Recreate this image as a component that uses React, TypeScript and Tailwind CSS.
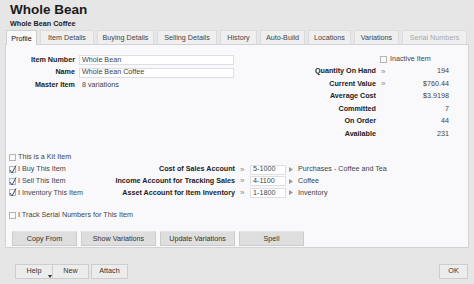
import React from "react";

const Check = ({ checked = false }: { checked?: boolean }) => (
  <span className="relative inline-block w-[7px] h-[7px] border border-[#b4b4b4] bg-[#fafafa] shrink-0">
    {checked && (
      <svg className="absolute left-[-1px] top-[-2px]" width="8" height="9" viewBox="0 0 8 9">
        <path d="M1 5 L3 8 L7 0.5" fill="none" stroke="#3b4a7a" strokeWidth="1" />
      </svg>
    )}
  </span>
);

const tabs: [string, number, boolean?][] = [
  ["Profile", 31],
  ["Item Details", 54],
  ["Buying Details", 57],
  ["Selling Details", 60],
  ["History", 37],
  ["Auto-Build", 45],
  ["Locations", 43],
  ["Variations", 45],
  ["Serial Numbers", 65, true],
];

const stats: [string, boolean, string][] = [
  ["Quantity On Hand", true, "194"],
  ["Current Value", true, "$760.44"],
  ["Average Cost", false, "$3.9198"],
  ["Committed", false, "7"],
  ["On Order", false, "44"],
  ["Available", false, "231"],
];

const accounts: [string, boolean, string, string, string][] = [
  ["This is a Kit Item", false, "", "", ""],
  ["I Buy This Item", true, "Cost of Sales Account", "5-1000", "Purchases - Coffee and Tea"],
  ["I Sell This Item", true, "Income Account for Tracking Sales", "4-1100", "Coffee"],
  ["I Inventory This Item", true, "Asset Account for Item Inventory", "1-1800", "Inventory"],
];

export default function App() {
  return (
    <div className="w-[474px] h-[284px] bg-[#e6e6e6] font-['Liberation_Sans','Arial',sans-serif] text-[7.2px] text-[#333] overflow-hidden">
      {/* Header */}
      <div className="pl-[10px] pt-[3px]">
        <div className="text-[13.5px] leading-[14px] font-bold text-[#1a1a1a]">Whole Bean</div>
        <div className="mt-[3px] text-[7.2px] leading-[8px] font-bold text-[#222]">Whole Bean Coffee</div>
      </div>

      {/* Tabs */}
      <div className="mt-[2px] ml-[6px] flex gap-[3px] h-[14px] relative z-10">
        {tabs.map(([t, w, dis], i) => (
          <div
            key={t}
            style={{ width: w }}
            className={
              i === 0
                ? "h-[15px] bg-[#f9f9fc] border border-b-0 border-[#cfcfcf] flex items-center justify-center text-[#111] rounded-t-[1px]"
                : "h-[14px] bg-[#efefef] border border-b-0 border-[#dcdcdc] flex items-center justify-center " +
                  (dis ? "text-[#a8a8a8]" : "text-[#444]")
            }
          >
            <span className="leading-[8px] pt-[1px]">{t}</span>
          </div>
        ))}
      </div>

      {/* Panel */}
      <div className="ml-[5px] w-[464px] h-[204px] bg-[#f9f9fc] border border-[#d2d2d6] pt-[8px]">
        {/* Top section */}
        <div className="flex">
          <div className="mt-[1px] grid grid-cols-[69px_155px] gap-x-[4px] auto-rows-[12.5px] items-center">
            <div className="text-right font-bold text-[#222]">Item Number</div>
            <div className="h-[10px] bg-white border border-[#dedee4] pl-[2px] flex items-center text-[#444]">Whole Bean</div>
            <div className="text-right font-bold text-[#222]">Name</div>
            <div className="h-[10px] bg-white border border-[#dedee4] pl-[2px] flex items-center text-[#444]">Whole Bean Coffee</div>
            <div className="text-right font-bold text-[#222]">Master Item</div>
            <div className="pl-[3px] text-[#444]">8 variations</div>
          </div>
          <div className="ml-[5px] grid grid-cols-[137px_6px_59px] gap-x-[4px] auto-rows-[12.5px] items-center">
            <div />
            <div className="flex items-center"><Check /></div>
            <div className="text-[#444] whitespace-nowrap">Inactive Item</div>
            {stats.map(([l, a, v]) => (
              <React.Fragment key={l}>
                <div className="text-right font-bold text-[#222]">{l}</div>
                <div className="text-[#888] text-[8px] leading-[8px] pl-[1px]">{a ? "»" : ""}</div>
                <div className="text-right text-[#444]">{v}</div>
              </React.Fragment>
            ))}
          </div>
        </div>

        {/* Accounts section */}
        <div className="mt-[11.5px] ml-[3px] grid grid-cols-[226px_15px_36px_12px_1fr] auto-rows-[11.7px] items-center">
          {accounts.map(([l, c, al, code, name]) => (
            <React.Fragment key={l}>
              <div className="flex items-center justify-between">
                <div className="flex items-center gap-[2px]">
                  <Check checked={c} />
                  <span className="text-[#444]">{l}</span>
                </div>
                <span className="font-bold text-[#222]">{al}</span>
              </div>
              <div className="pl-[5px] text-[#888] text-[8px] leading-[8px]">{code ? "»" : ""}</div>
              <div>
                {code && (
                  <div className="h-[10px] bg-white border border-[#dedee4] pl-[2px] flex items-center text-[#444]">{code}</div>
                )}
              </div>
              <div className="pl-[3px] flex items-center">
                {code && (
                  <svg width="4" height="5" viewBox="0 0 4 5">
                    <path d="M0 0 L4 2.5 L0 5 Z" fill="#999" />
                  </svg>
                )}
              </div>
              <div className="text-[#444]">{name}</div>
            </React.Fragment>
          ))}
        </div>

        <div className="mt-[11px] ml-[3px] h-[11.7px] flex items-center gap-[2px]">
          <Check />
          <span className="text-[#444]">I Track Serial Numbers for This Item</span>
        </div>

        {/* Buttons */}
        <div className="mt-[10px] ml-[6px] flex gap-[4px]">
          {[
            ["Copy From", 65],
            ["Show Variations", 75],
            ["Update Variations", 75],
            ["Spell", 65],
          ].map(([t, w]) => (
            <div
              key={t as string}
              style={{ width: w as number }}
              className="h-[15px] bg-[#dedede] border border-[#cbcbcb] border-t-[#e4e4e4] flex items-center justify-center text-[#333]"
            >
              {t}
            </div>
          ))}
        </div>
      </div>

      {/* Footer */}
      <div className="mt-[16px] flex items-center pl-[15px] pr-[6px]">
        <div className="flex h-[15px]">
          <div className="relative w-[38px] bg-[#ececec] border border-[#cdcdcd] flex items-center justify-center text-[#333]">
            Help
            <svg className="absolute left-[32px] top-[10px]" width="4" height="3" viewBox="0 0 4 3">
              <path d="M0 0 L4 0 L2 3 Z" fill="#333" />
            </svg>
          </div>
          <div className="w-[36px] bg-[#ececec] border border-l-0 border-[#cdcdcd] flex items-center justify-center text-[#333]">New</div>
          <div className="ml-[2px] w-[37px] bg-[#ececec] border border-[#cdcdcd] flex items-center justify-center text-[#333]">Attach</div>
        </div>
        <div className="ml-auto w-[29px] h-[15px] bg-[#ececec] border border-[#cdcdcd] flex items-center justify-center text-[#333]">OK</div>
      </div>
    </div>
  );
}
